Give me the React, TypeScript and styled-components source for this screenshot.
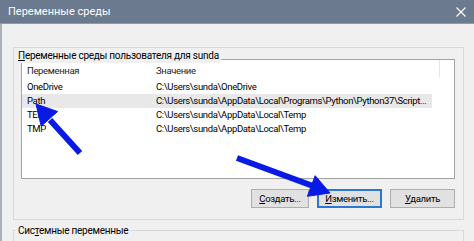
import React from "react";
import styled, { createGlobalStyle } from "styled-components";

const Global = createGlobalStyle`
  html, body { margin: 0; padding: 0; background: #f0f0f0; }
  body {
    width: 474px; height: 241px; overflow: hidden;
    font-family: Roboto, "Noto Sans", sans-serif;
  }
  * { box-sizing: border-box; }
`;

const Window = styled.div`
  position: relative;
  width: 474px;
  height: 241px;
  display: flex;
  flex-direction: column;
  background: #f0f0f0;
  overflow: hidden;
`;

const TitleBar = styled.div`
  height: 24px;
  flex: none;
  display: flex;
  align-items: center;
  justify-content: space-between;
  padding: 0 8px 0 8px;
  background: #6b7a8e;
  color: #ffffff;
  font-size: 11px;
  border-bottom: 1px solid #8e9aab;
`;

const CloseBox = styled.div`
  width: 16px;
  height: 16px;
  display: flex;
  align-items: center;
  justify-content: center;
  margin-right: -3px;
`;

const Body = styled.div`
  flex: 1;
  display: flex;
  flex-direction: column;
  padding: 23px 10px 0 11px;
  border-left: 2px solid #a9b0ba;
`;

const GroupBox = styled.div<{ $h?: number; $gap?: number }>`
  position: relative;
  flex: none;
  ${(p) => (p.$h ? `height: ${p.$h}px;` : "flex: 1;")}
  margin-top: ${(p) => p.$gap ?? 0}px;
  border: 1px solid #d9d9d9;
  padding: 11px 8px 0 7px;
  display: flex;
  flex-direction: column;
`;

const GroupLabel = styled.span<{ $top: number }>`
  position: absolute;
  left: 2px;
  top: ${(p) => p.$top}px;
  padding: 0 2px;
  background: #f0f0f0;
  font-size: 10px;
  letter-spacing: -0.25px;
  line-height: 14px;
  color: #000;
`;

const ListView = styled.div`
  height: 120px;
  border: 1px solid #a3a3a3;
  background: #ffffff;
  display: flex;
  flex-direction: column;
  font-size: 9.5px;
  letter-spacing: -0.35px;
`;

const Cols = `display: grid; grid-template-columns: 128px 282px 1fr;`;

const HeaderRow = styled.div`
  ${Cols}
  height: 20px;
  align-items: center;
  color: #1e1e1e;
`;

const HeaderCell = styled.div<{ $pad: number }>`
  padding-left: ${(p) => p.$pad}px;
  white-space: nowrap;
`;

const HeaderDivider = styled.div`
  width: 1px;
  height: 17px;
  margin-left: 7px;
  align-self: start;
  background: #e5e5e5;
`;

const Row = styled.div<{ $selected?: boolean }>`
  ${Cols}
  grid-template-columns: 128px 282px;
  width: 410px;
  height: 14px;
  line-height: 14px;
  color: #000;
  background: ${(p) => (p.$selected ? "#e8e8e8" : "transparent")};
`;

const Cell = styled.div<{ $pad: number }>`
  padding-left: ${(p) => p.$pad}px;
  white-space: nowrap;
  overflow: hidden;
`;

const ButtonRow = styled.div`
  display: flex;
  justify-content: flex-end;
  gap: 8px;
  margin-top: 10px;
`;

const Button = styled.div<{ $w: number; $focused?: boolean }>`
  width: ${(p) => p.$w}px;
  height: 19px;
  display: flex;
  align-items: center;
  justify-content: center;
  background: #e1e1e1;
  border: ${(p) => (p.$focused ? "2px solid #2b78cf" : "1px solid #adadad")};
  font-size: 9.5px;
  letter-spacing: -0.3px;
  color: #000;
`;

const Mn = styled.span`
  text-decoration: underline;
  text-underline-offset: 1px;
`;

const Overlay = styled.svg`
  position: absolute;
  left: 0;
  top: 0;
  pointer-events: none;
`;

const rows = [
  { name: "OneDrive", value: "C:\\Users\\sunda\\OneDrive" },
  { name: "Path", value: "C:\\Users\\sunda\\AppData\\Local\\Programs\\Python\\Python37\\Script...", selected: true },
  { name: "TEMP", value: "C:\\Users\\sunda\\AppData\\Local\\Temp" },
  { name: "TMP", value: "C:\\Users\\sunda\\AppData\\Local\\Temp" },
];

export default function App() {
  return (
    <>
      <Global />
      <Window>
        <TitleBar>
          <span>Переменные среды</span>
          <CloseBox>
            <svg width="10" height="10" viewBox="0 0 10 10">
              <path d="M0.5 0.5 L9.5 9.5 M9.5 0.5 L0.5 9.5" stroke="#ffffff" strokeWidth="1.1" />
            </svg>
          </CloseBox>
        </TitleBar>
        <Body>
          <GroupBox $h={173}>
            <GroupLabel $top={1}>
              <Mn>П</Mn>еременные среды пользователя для sunda
            </GroupLabel>
            <ListView>
              <HeaderRow>
                <HeaderCell $pad={5}>Переменная</HeaderCell>
                <HeaderCell $pad={6}>Значение</HeaderCell>
                <HeaderDivider />
              </HeaderRow>
              {rows.map((r) => (
                <Row key={r.name} $selected={r.selected}>
                  <Cell $pad={5}>{r.name}</Cell>
                  <Cell $pad={6}>{r.value}</Cell>
                </Row>
              ))}
            </ListView>
            <ButtonRow>
              <Button $w={58}>
                <span><Mn>С</Mn>оздать...</span>
              </Button>
              <Button $w={65} $focused>
                <span><Mn>И</Mn>зменить...</span>
              </Button>
              <Button $w={65}>
                <span><Mn>У</Mn>далить</span>
              </Button>
            </ButtonRow>
          </GroupBox>
          <GroupBox $gap={10}>
            <GroupLabel $top={-7}>
              Сис<Mn>т</Mn>емные переменные
            </GroupLabel>
          </GroupBox>
        </Body>
        <Overlay width="474" height="241" viewBox="0 0 474 241">
          <g fill="#0a1ae6" stroke="#0a1ae6">
            <line x1="80" y1="153" x2="50" y2="120" strokeWidth="6" />
            <polygon points="36,104 57.6,111.5 41.2,126.2" strokeWidth="1" />
            <line x1="237" y1="158" x2="313" y2="186" strokeWidth="6" />
            <polygon points="330,193 315.2,175.7 307.4,196.3" strokeWidth="1" />
          </g>
        </Overlay>
      </Window>
    </>
  );
}
